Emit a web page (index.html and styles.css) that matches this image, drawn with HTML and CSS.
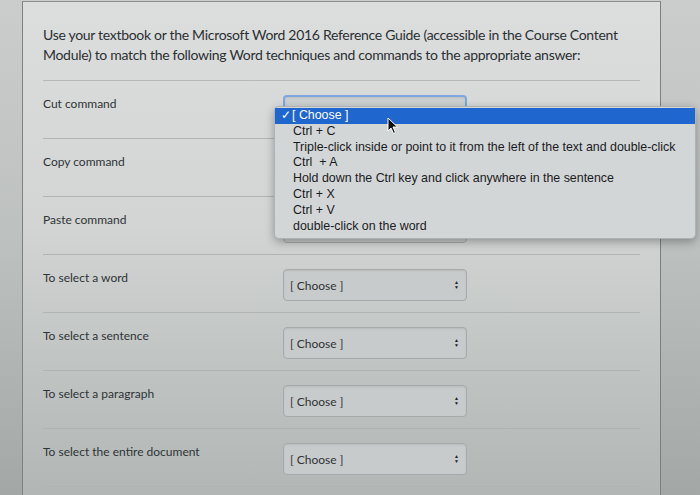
FILE: index.html
```html
<!DOCTYPE html>
<html lang="en">
<head>
  <meta charset="UTF-8">
  <meta name="viewport" content="width=device-width, initial-scale=1.0">
  <title>Matching Question</title>
  <link rel="stylesheet" href="styles.css">
</head>
<body>
  <div class="page">
    <div class="panel">
      <p class="question">Use your textbook or the Microsoft Word 2016 Reference Guide (accessible in the Course Content Module) to match the following Word techniques and commands to the appropriate answer:</p>

      <div class="match-list">
        <!-- Row 1: open dropdown -->
        <div class="match-row">
          <span class="match-label">Cut command</span>
          <div class="select-wrap">
            <div class="select focused"></div>
            <ul class="popup">
              <li class="active"><span class="check">&#10003;</span>[ Choose ]</li>
              <li>Ctrl + C</li>
              <li>Triple-click inside or point to it from the left of the text and double-click</li>
              <li>Ctrl &nbsp;+ A</li>
              <li>Hold down the Ctrl key and click anywhere in the sentence</li>
              <li>Ctrl + X</li>
              <li>Ctrl + V</li>
              <li>double-click on the word</li>
            </ul>
            <svg class="cursor" width="12" height="18" viewBox="0 0 12 18">
              <path d="M1 1 L1 14 L4 11 L6.5 16.5 L8.5 15.5 L6 10 L10.5 10 Z" fill="#111" stroke="#fff" stroke-width="1"/>
            </svg>
          </div>
        </div>

        <!-- these two are hidden under the open list -->
        <div class="match-row">
          <span class="match-label">Copy command</span>
          <div class="select-wrap">
            <div class="select"></div>
          </div>
        </div>

        <div class="match-row">
          <span class="match-label">Paste command</span>
          <div class="select-wrap">
            <div class="select"></div>
          </div>
        </div>

        <div class="match-row">
          <span class="match-label">To select a word</span>
          <div class="select-wrap">
            <div class="select"><span>[ Choose ]</span><span class="arrows">&#9650;<br>&#9660;</span></div>
          </div>
        </div>

        <div class="match-row">
          <span class="match-label">To select a sentence</span>
          <div class="select-wrap">
            <div class="select"><span>[ Choose ]</span><span class="arrows">&#9650;<br>&#9660;</span></div>
          </div>
        </div>

        <div class="match-row">
          <span class="match-label">To select a paragraph</span>
          <div class="select-wrap">
            <div class="select"><span>[ Choose ]</span><span class="arrows">&#9650;<br>&#9660;</span></div>
          </div>
        </div>

        <div class="match-row">
          <span class="match-label">To select the entire document</span>
          <div class="select-wrap">
            <div class="select"><span>[ Choose ]</span><span class="arrows">&#9650;<br>&#9660;</span></div>
          </div>
        </div>
      </div>
    </div>
  </div>
</body>
</html>
```

FILE: styles.css
```css
html, body {
  margin: 0;
  padding: 0;
  height: 100%;
}
body {
  font-family: Lato, "Liberation Sans", sans-serif;
  background: linear-gradient(to bottom, #cbcdcc 0%, #bcc0bf 50%, #a3a8a7 100%);
  color: #2e3336;
  overflow: hidden;
}
.page {
  padding-left: 22px;
  height: 100%;
}
.panel {
  width: 639px;
  height: 100%;
  box-sizing: border-box;
  border-left: 1px solid #7e8282;
  border-right: 1px solid #7a7f7f;
  border-top: 1px solid #8a8e8e;
  margin-top: 1px;
  padding: 0 20px;
  background: linear-gradient(to bottom, #dcdedd 0%, #d2d5d4 45%, #bfc3c2 75%, #b2b7b6 100%);
}
.question {
  margin: 23px 0 15px;
  font-size: 14px;
  letter-spacing: -0.3px;
  line-height: 20px;
  color: #2b3033;
}
.match-list {
  border-top: 1px solid #b6b9b9;
}
.match-row {
  display: flex;
  align-items: flex-start;
  padding: 14px 0 11px;
  border-bottom: 1px solid #b0b4b3;
}
.match-label {
  width: 240px;
  font-size: 12px;
  line-height: 18px;
  color: #2f3436;
}
.select-wrap {
  position: relative;
}
.select {
  width: 184px;
  height: 32px;
  box-sizing: border-box;
  display: flex;
  align-items: center;
  justify-content: space-between;
  padding: 0 7px 0 6px;
  border: 1px solid #a6aaaa;
  border-radius: 4px;
  background: #c8cbcb;
  box-shadow: inset 0 1px 2px rgba(0, 0, 0, 0.08);
  font-size: 12px;
  color: #303436;
}
.select.focused {
  border: 2px solid #7ea7df;
  background: #cdd0d1;
}
.arrows {
  font-size: 5px;
  line-height: 5px;
  text-align: center;
  color: #222;
}
.popup {
  position: absolute;
  left: -9px;
  top: 11px;
  width: 420px;
  margin: 0;
  padding: 1px 0 4px;
  list-style: none;
  background: #d3d6d7;
  border: 1px solid #aeb2b3;
  border-radius: 5px;
  box-shadow: 0 3px 10px rgba(0, 0, 0, 0.3);
  font-family: "Liberation Sans", Arial, sans-serif;
  font-size: 12.4px;
  color: #1a1c1d;
  z-index: 5;
}
.popup li {
  height: 15.8px;
  line-height: 15.8px;
  padding-left: 18px;
  white-space: nowrap;
}
.popup li.active {
  background: #1f66cf;
  color: #fff;
  padding-left: 6px;
}
.check {
  display: inline-block;
  width: 11px;
}
.cursor {
  position: absolute;
  left: 104px;
  top: 22px;
  z-index: 6;
}
```
